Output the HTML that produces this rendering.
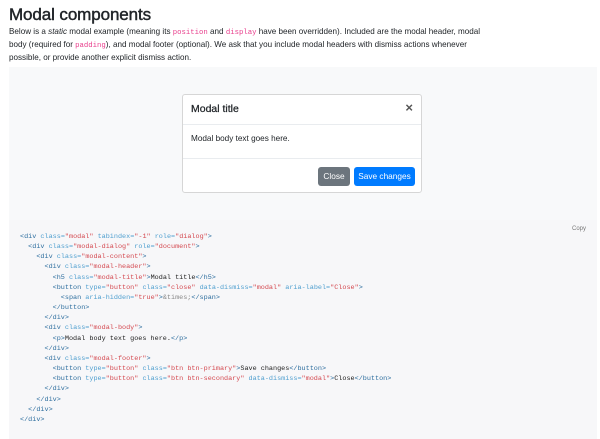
<!DOCTYPE html>
<html><head><meta charset="utf-8"><style>
*{margin:0;padding:0;box-sizing:border-box}
body{width:600px;height:439px;overflow:hidden;background:#fff;font-family:"Liberation Sans",sans-serif;color:#212529;position:relative}
h2{position:absolute;left:9px;top:5px;font-size:17px;font-weight:400;-webkit-text-stroke:0.45px #212529;letter-spacing:-0.1px}
p.lead{position:absolute;left:9px;top:26px;width:480px;font-size:8.1px;line-height:11.2px;color:#212529}
code{font-family:"Liberation Mono",monospace;color:#e83e8c;font-size:7.3px}
.ex{position:absolute;left:9px;top:67px;width:588px;height:153px;background:#f8f9fa}
.modal{position:absolute;left:182px;top:94px;width:240px;height:99px;background:#fff;border:1px solid #d6d6d6;border-radius:3px}
.mh{height:30px;border-bottom:1px solid #e9ecef;position:relative}
.mh .t{position:absolute;left:8px;top:8px;font-size:10.5px;font-weight:400;-webkit-text-stroke:0.25px #212529}
.mh .x{position:absolute;right:8px;top:5px;font-size:13px;font-weight:700;color:#555}
.mb{height:34px;border-bottom:1px solid #e9ecef;font-size:8.2px;padding:9px 8px}
.btn{position:absolute;top:72px;height:19px;border-radius:3px;color:#fff;font-size:8.3px;line-height:19px;text-align:center}
.code{position:absolute;left:9px;top:220px;width:588px;height:219px;background:#f7f7f9}
pre{position:absolute;left:20px;top:232px;font-family:"Liberation Mono",monospace;font-size:6.8px;line-height:10.15px;color:#222}
.n{color:#2f6f9f}.a{color:#4f9fcf}.s{color:#d44950}
.copy{position:absolute;left:572px;top:226px;font-size:6px;color:#777}
</style></head><body>
<h2>Modal components</h2>
<p class="lead">Below is a <i>static</i> modal example (meaning its <code>position</code> and <code>display</code> have been overridden). Included are the modal header, modal body (required for <code>padding</code>), and modal footer (optional). We ask that you include modal headers with dismiss actions whenever possible, or provide another explicit dismiss action.</p>
<div class="ex"></div>
<div class="modal">
<div class="mh"><span class="t">Modal title</span><span class="x">×</span></div>
<div class="mb">Modal body text goes here.</div>
<div class="btn" style="left:135px;width:32px;background:#6c757d">Close</div>
<div class="btn" style="left:171px;width:61px;background:#007bff">Save changes</div>
</div>
<div class="code"></div>
<div class="copy">Copy</div>
<pre><span class="n">&lt;div</span> <span class="a">class=</span><span class="s">"modal"</span> <span class="a">tabindex=</span><span class="s">"-1"</span> <span class="a">role=</span><span class="s">"dialog"</span><span class="n">&gt;</span>
  <span class="n">&lt;div</span> <span class="a">class=</span><span class="s">"modal-dialog"</span> <span class="a">role=</span><span class="s">"document"</span><span class="n">&gt;</span>
    <span class="n">&lt;div</span> <span class="a">class=</span><span class="s">"modal-content"</span><span class="n">&gt;</span>
      <span class="n">&lt;div</span> <span class="a">class=</span><span class="s">"modal-header"</span><span class="n">&gt;</span>
        <span class="n">&lt;h5</span> <span class="a">class=</span><span class="s">"modal-title"</span><span class="n">&gt;</span>Modal title<span class="n">&lt;/h5&gt;</span>
        <span class="n">&lt;button</span> <span class="a">type=</span><span class="s">"button"</span> <span class="a">class=</span><span class="s">"close"</span> <span class="a">data-dismiss=</span><span class="s">"modal"</span> <span class="a">aria-label=</span><span class="s">"Close"</span><span class="n">&gt;</span>
          <span class="n">&lt;span</span> <span class="a">aria-hidden=</span><span class="s">"true"</span><span class="n">&gt;</span><span style="color:#888">&amp;times;</span><span class="n">&lt;/span&gt;</span>
        <span class="n">&lt;/button&gt;</span>
      <span class="n">&lt;/div&gt;</span>
      <span class="n">&lt;div</span> <span class="a">class=</span><span class="s">"modal-body"</span><span class="n">&gt;</span>
        <span class="n">&lt;p&gt;</span>Modal body text goes here.<span class="n">&lt;/p&gt;</span>
      <span class="n">&lt;/div&gt;</span>
      <span class="n">&lt;div</span> <span class="a">class=</span><span class="s">"modal-footer"</span><span class="n">&gt;</span>
        <span class="n">&lt;button</span> <span class="a">type=</span><span class="s">"button"</span> <span class="a">class=</span><span class="s">"btn btn-primary"</span><span class="n">&gt;</span>Save changes<span class="n">&lt;/button&gt;</span>
        <span class="n">&lt;button</span> <span class="a">type=</span><span class="s">"button"</span> <span class="a">class=</span><span class="s">"btn btn-secondary"</span> <span class="a">data-dismiss=</span><span class="s">"modal"</span><span class="n">&gt;</span>Close<span class="n">&lt;/button&gt;</span>
      <span class="n">&lt;/div&gt;</span>
    <span class="n">&lt;/div&gt;</span>
  <span class="n">&lt;/div&gt;</span>
<span class="n">&lt;/div&gt;</span></pre>
</body></html>
